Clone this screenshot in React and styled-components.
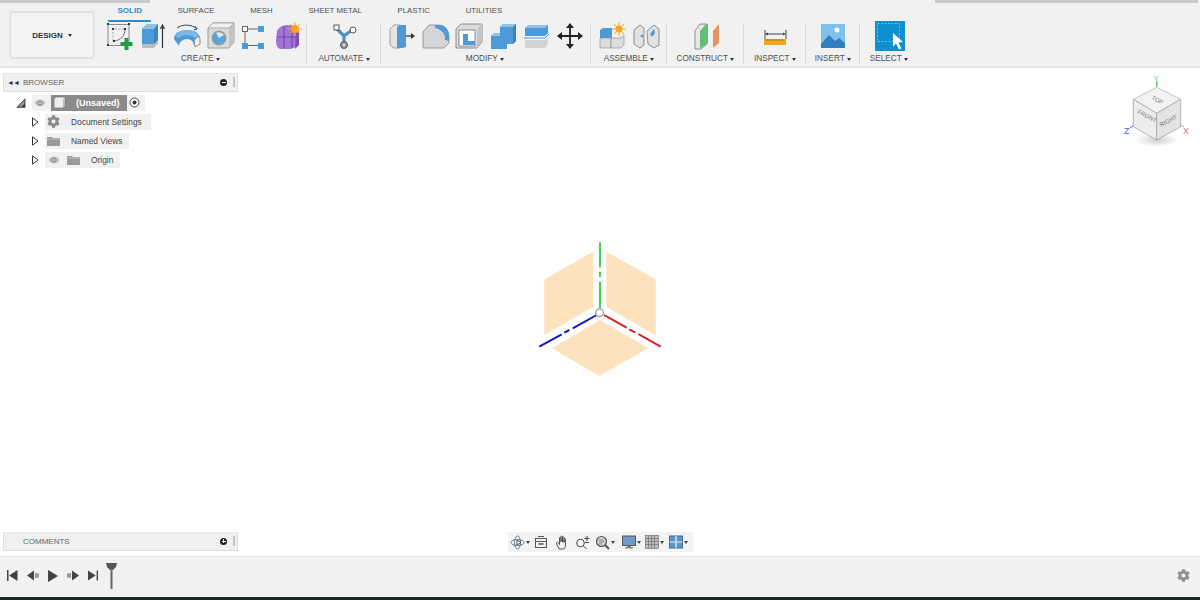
import React from "react";
import styled, { createGlobalStyle } from "styled-components";
import { FaCog } from "react-icons/fa";

const GlobalStyle = createGlobalStyle`
  html, body {
    margin: 0;
    padding: 0;
    background: #fff;
    font-family: "Liberation Sans", Arial, sans-serif;
  }
`;

const Page = styled.div`
  width: 1200px;
  height: 600px;
  display: flex;
  flex-direction: column;
  overflow: hidden;
`;

const TopStrip = styled.div`
  height: 3px;
  flex: none;
  display: flex;
  justify-content: space-between;
  background: #f1f1f1;
  padding-right: 2px;
`;

const StripSegment = styled.div`
  width: ${(p) => p.$width}px;
  background: #c9c9c9;
`;

const Toolbar = styled.div`
  height: 65px;
  flex: none;
  display: flex;
  align-items: flex-start;
  background: #f1f1f1;
  border-bottom: 2px solid #e4e4e4;
  box-sizing: border-box;
`;

const DesignButton = styled.div`
  width: 86px;
  height: 48px;
  margin: 8px 8px 0 9px;
  flex: none;
  box-sizing: border-box;
  display: flex;
  align-items: center;
  justify-content: center;
  gap: 5px;
  border: 2px solid #e2e2e2;
  border-radius: 4px;
  background: #f2f2f2;
  color: #333;
  font-size: 8px;
  font-weight: bold;
`;

const Caret = styled.span`
  display: inline-block;
  width: 0;
  height: 0;
  border-left: 2.5px solid transparent;
  border-right: 2.5px solid transparent;
  border-top: 3px solid ${(p) => p.$color || "#333"};
`;

const ToolbarBody = styled.div`
  display: flex;
  flex-direction: column;
`;

const TabRow = styled.div`
  height: 19px;
  display: flex;
  gap: 16.7px;
  margin-left: 5px;
`;

const Tab = styled.div`
  height: 19px;
  box-sizing: border-box;
  padding: 3px 9.5px 0;
  font-size: ${(p) => (p.$active ? "8px" : "7.8px")};
  line-height: 10px;
  white-space: nowrap;
  color: ${(p) => (p.$active ? "#2a8fc9" : "#4f4f4f")};
  font-weight: ${(p) => (p.$active ? "bold" : "normal")};
  border-bottom: 2px solid ${(p) => (p.$active ? "#2a8fc9" : "transparent")};
`;

const GroupRow = styled.div`
  display: flex;
`;

const Group = styled.div`
  width: ${(p) => p.$width}px;
  height: 41px;
  box-sizing: border-box;
  display: flex;
  flex-direction: column;
  align-items: center;
  position: relative;
  &::after {
    content: "";
    position: absolute;
    right: 0;
    top: 2px;
    bottom: -1px;
    width: 1px;
    background: ${(p) => (p.$last ? "transparent" : "#dadada")};
  }
`;

const ToolSlots = styled.div`
  display: flex;
  height: 32px;
  margin-top: -2px;
  margin-left: ${(p) => p.$shift || 0}px;
  align-self: ${(p) => (p.$start ? "flex-start" : "center")};
`;

const ToolSlot = styled.div`
  width: 33.6px;
  height: 32px;
  display: flex;
  align-items: center;
  justify-content: center;
`;

const GroupLabel = styled.div`
  display: flex;
  align-items: center;
  gap: 2.5px;
  margin-top: 2px;
  margin-right: ${(p) => p.$pull || 0}px;
  font-size: 8.2px;
  line-height: 10px;
  color: #505050;
  white-space: nowrap;
`;

const Canvas = styled.div`
  flex: 1;
  position: relative;
  background: #fff;
  display: flex;
  flex-direction: column;
  justify-content: space-between;
  padding: 5px 0 5px 3px;
  min-height: 0;
`;

const SidePanel = styled.div`
  width: 235px;
  display: flex;
  flex-direction: column;
`;

const PanelHeader = styled.div`
  height: 19px;
  box-sizing: border-box;
  display: flex;
  align-items: center;
  background: #f0f0f0;
  border: 1px solid #dedede;
  border-top-color: #e8e8e8;
  color: #666;
  font-size: 8px;
  padding: 0 2px 1px 3px;
`;

const CollapseMark = styled.span`
  width: 16px;
  flex: none;
  font-size: 7px;
  letter-spacing: -1px;
  color: #333;
`;

const PanelTitle = styled.span`
  flex: 1;
  margin-left: ${(p) => p.$indent || 0}px;
`;

const PanelDot = styled.span`
  width: 7px;
  height: 7px;
  border-radius: 50%;
  background: #222;
  margin-right: 6px;
  position: relative;
  &::after {
    content: "";
    position: absolute;
    left: 1.5px;
    top: 3px;
    width: 4px;
    height: 1px;
    background: #eee;
  }
  &::before {
    content: "";
    display: ${(p) => (p.$plus ? "block" : "none")};
    position: absolute;
    left: 3px;
    top: 1.5px;
    width: 1px;
    height: 4px;
    background: #eee;
  }
`;

const PanelGrip = styled.span`
  width: 2px;
  height: 10px;
  background: #c4c4c4;
`;

const Tree = styled.div`
  display: flex;
  flex-direction: column;
  margin-top: 1px;
`;

const TreeRow = styled.div`
  height: 19px;
  display: flex;
  align-items: center;
  padding-left: ${(p) => p.$indent}px;
`;

const Twisty = styled.svg`
  flex: none;
  width: 10px;
  height: 10px;
  margin-right: ${(p) => p.$gap}px;
`;

const NodeChip = styled.div`
  height: 16px;
  display: flex;
  align-items: center;
  background: #f1f1f1;
  font-size: 8.4px;
  color: #444;
  padding-right: ${(p) => p.$pad || 0}px;
`;

const NodeText = styled.span`
  display: inline-flex;
  align-items: center;
  margin-left: ${(p) => p.$gap}px;
  white-space: nowrap;
`;

const RootName = styled.div`
  height: 16px;
  width: 76px;
  box-sizing: border-box;
  display: flex;
  align-items: center;
  background: #8b8b8b;
  color: #fff;
  font-weight: bold;
  font-size: 9px;
  padding-left: 2px;
`;

const ViewCubeWrap = styled.svg`
  position: absolute;
  top: 2px;
  right: 0;
`;

const OriginWrap = styled.svg`
  position: absolute;
  left: 530px;
  top: 167px;
`;

const NavBar = styled.div`
  position: absolute;
  left: 508px;
  top: 464px;
  height: 20px;
  width: 185px;
  box-sizing: border-box;
  display: flex;
  align-items: center;
  padding-left: 2px;
  background: #f3f3f3;
`;

const NavItem = styled.div`
  display: flex;
  align-items: center;
  gap: 1px;
  width: ${(p) => p.$width}px;
  flex: none;
`;

const Timeline = styled.div`
  height: 41px;
  flex: none;
  box-sizing: border-box;
  display: flex;
  align-items: center;
  background: #f1f1f1;
  border-top: 1px solid #e6e6e6;
  padding: 0 10px 3px 7px;
`;

const Transport = styled.div`
  display: flex;
  align-items: center;
  gap: 9px;
`;

const Playhead = styled.svg`
  margin-left: 7.5px;
`;

const SettingsCog = styled(FaCog)`
  margin-left: auto;
  color: #8f8f8f;
  font-size: 13px;
`;

const BottomEdge = styled.div`
  height: 3px;
  flex: none;
  background: #1e2a24;
`;

/* ribbon icons, 32x32 */
const Ico = ({ children }) => (
  <svg width="32" height="32" viewBox="0 0 32 32">
    {children}
  </svg>
);

const SketchIcon = () => (
  <Ico>
    <rect x="4" y="4.500" width="21" height="21" fill="none" stroke="#8a8a8a" strokeWidth="1" />
    <path d="M9 21V9h12" fill="none" stroke="#a5a5a5" strokeDasharray="2 1.500" />
    <path d="M21 9c0 7-4 11-11 12" fill="none" stroke="#777" />
    <path d="M3 3h2v2H3zM24 3h2v2h-2zM3 24h2v2H3zM8 8h2v2H8zM9 20h2v2H9zM20 8h2v2h-2z" fill="#333" />
    <path d="M20.500 18h4v4h4v4h-4v4h-4v-4h-4v-4h4z" fill="#1f9b45" />
  </Ico>
);

const ExtrudeIcon = () => (
  <Ico>
    <path d="M5 9l5-5h11v19l-4 4H5z" fill="#4e9ad8" />
    <path d="M5 9l5-5h11l-4 5z" fill="#8ec2ea" />
    <path d="M17 9l4-5v19l-4 4z" fill="#3b83c0" />
    <path d="M5 24h12l4-4v3l-4 5H5z" fill="#bdbdbd" />
    <path d="M25.500 28V6M23.500 9l2-4 2 4" fill="none" stroke="#333" strokeWidth="1.200" />
  </Ico>
);

const RevolveIcon = () => (
  <Ico>
    <path d="M3 19c0-6 6-9 13-9s13 3 13 9l-6 7c0-4-3-7-7-7s-8 3-8 7z" fill="#4e9ad8" />
    <path d="M4 16c3-4 7-6 12-6s9 2 12 6l-4 2c-2-2-5-3-8-3s-6 1-8 3z" fill="#7db8e6" />
    <path d="M23 20l5-4 1 3v5l-5 3z" fill="#efefef" stroke="#777" strokeWidth="0.8" />
    <path d="M6 8c5-4 15-4 20 1M24 6l2 3-3 1" fill="none" stroke="#444" strokeWidth="1" />
  </Ico>
);

const HoleIcon = () => (
  <Ico>
    <path d="M3 8l5-5h21v19l-5 6H3z" fill="#dcdcdc" stroke="#8a8a8a" strokeWidth="0.8" />
    <path d="M24 8l5-5v19l-5 6z" fill="#c4c4c4" />
    <path d="M3 8l5-5h21l-5 5z" fill="#f0f0f0" stroke="#8a8a8a" strokeWidth="0.6" />
    <circle cx="14" cy="18" r="7.500" fill="#9a9a9a" />
    <circle cx="14" cy="18" r="6" fill="#5ba3dc" />
    <path d="M14 18l5-3a6 6 0 0 0-8-2z" fill="#d6e8f5" />
  </Ico>
);

const PatternIcon = () => (
  <Ico>
    <rect x="4.500" y="6.500" width="5" height="5" fill="#fff" stroke="#666" />
    <path d="M10 9h10M7 12v11M10 25.500h10" stroke="#666" fill="none" />
    <rect x="20" y="6" width="6" height="6" fill="#4b9bd5" />
    <rect x="4" y="23" width="6" height="6" fill="#4b9bd5" />
    <rect x="20" y="23" width="6" height="6" fill="#4b9bd5" />
  </Ico>
);

const FormIcon = () => (
  <Ico>
    <path d="M5 11c2-4 6-6 11-6 6 0 11 3 11 10 0 8-3 14-10 14H9c-3 0-5-3-5-9z" fill="#a473d6" />
    <path d="M5 17h20M12 6v22M20 7v21" stroke="#6f42a8" strokeWidth="1" fill="none" />
    <path d="M24 12l3-1v14l-4 4z" fill="#7c4fb6" />
    <circle cx="23" cy="9" r="4" fill="#f5a623" />
    <path d="M23 2v14M16 9h14M18 4l10 10M28 4L18 14" stroke="#f5a623" strokeWidth="1" />
  </Ico>
);

const AutomateIcon = () => (
  <Ico>
    <path d="M8 8l8 8 8-6M16 16v8" fill="none" stroke="#4e90c6" strokeWidth="3.200" />
    <rect x="6" y="5" width="5" height="5" fill="#fff" stroke="#555" />
    <circle cx="25" cy="10" r="3" fill="#fff" stroke="#555" />
    <circle cx="16" cy="25" r="3.500" fill="#999" stroke="#555" />
    <circle cx="16" cy="25" r="1" fill="#fff" />
  </Ico>
);

const PressPullIcon = () => (
  <Ico>
    <path d="M4 9l4-4h6v23H8l-4-3z" fill="#e4e4e4" stroke="#888" strokeWidth="0.8" />
    <path d="M11 7l3-2h6v22l-3 1h-6z" fill="#4e9ad8" />
    <path d="M20 16h6" stroke="#333" strokeWidth="1.200" />
    <path d="M25 13l4 3-4 3z" fill="#333" />
  </Ico>
);

const FilletIcon = () => (
  <Ico>
    <path d="M3 12l6-7h10c6 0 10 6 10 12v6l-5 5H3z" fill="#d6d6d6" stroke="#888" strokeWidth="0.8" />
    <path d="M15 5h5c5 0 9 5 9 11v5l-4-1c1-6-4-11-10-12z" fill="#4e9ad8" />
  </Ico>
);

const ShellIcon = () => (
  <Ico>
    <path d="M3 9l5-5h21v18l-5 6H3z" fill="#dcdcdc" stroke="#777" strokeWidth="0.8" />
    <rect x="6" y="10" width="16" height="16" fill="#fff" stroke="#777" strokeWidth="0.8" />
    <path d="M10 14h5v7h7v4H10z" fill="#4e9ad8" />
    <path d="M24 9l5-5v18l-5 6z" fill="#c4c4c4" />
  </Ico>
);

const CombineIcon = () => (
  <Ico>
    <path d="M4 16l3-3h6V7l3-3h13v17l-3 3h-6v5H4z" fill="#4e9ad8" />
    <path d="M13 7l3-3h13l-3 3zM4 16l3-3h6v3z" fill="#8ec2ea" />
    <path d="M26 7l3-3v17l-3 3z" fill="#3b83c0" />
  </Ico>
);

const SplitIcon = () => (
  <Ico>
    <path d="M5 8l4-3h19v8l-3 3H5z" fill="#4e9ad8" />
    <path d="M5 8l4-3h19l-3 3z" fill="#8ec2ea" />
    <path d="M4 18h21l4-4" stroke="#4e9ad8" strokeWidth="1" fill="none" />
    <path d="M5 20h20l3-3v7l-3 4H5z" fill="#d2d2d2" />
  </Ico>
);

const MoveIcon = () => (
  <Ico>
    <path d="M16 7v19M6 16h20" stroke="#222" strokeWidth="1.800" />
    <path d="M16 3l4 5h-8zM16 29l4-5h-8zM3 16l5-4v8zM29 16l-5-4v8z" fill="#222" />
  </Ico>
);

const NewComponentIcon = () => (
  <Ico>
    <path d="M4 10l3-2h9v10H4z" fill="#4e9ad8" />
    <path d="M4 18h11v10H4z" fill="#dcdcdc" stroke="#888" strokeWidth="0.6" />
    <path d="M15 18h10l3-3v10l-3 3H15z" fill="#dcdcdc" stroke="#888" strokeWidth="0.6" />
    <circle cx="23" cy="9" r="3.500" fill="#f5a623" />
    <path d="M23 2v14M16 9h14M18 4l10 10M28 4L18 14" stroke="#f5a623" strokeWidth="1" />
  </Ico>
);

const JointIcon = () => (
  <Ico>
    <path d="M4 10l6-5 4 3v17l-4 3-6-4z" fill="#e2e2e2" stroke="#777" strokeWidth="0.8" />
    <path d="M17 11l7-6 5 4v16l-5 3-6-4z" fill="#e2e2e2" stroke="#777" strokeWidth="0.8" />
    <path d="M20 14l4-5 1 4-3 4z" fill="#4e9ad8" />
    <path d="M10 16l3-2v4z" fill="#4e9ad8" />
  </Ico>
);

const ConstructIcon = () => (
  <Ico>
    <path d="M5 11l5-7h7v20l-6 5H5z" fill="#e8e8e8" stroke="#777" strokeWidth="0.8" />
    <path d="M10 11l6-7h2v19l-7 5h-1z" fill="#63bd79" />
    <path d="M23 11l6-7v19l-6 5z" fill="#e59560" />
  </Ico>
);

const InspectIcon = () => (
  <Ico>
    <path d="M6 10v9M27 10v9M7 14h18" stroke="#444" strokeWidth="1" fill="none" />
    <path d="M6 14l3-1.500v3zM27 14l-3-1.500v3z" fill="#444" />
    <rect x="5" y="19" width="22" height="6" fill="#f0a41f" />
    <path d="M8 19v2M11 19v2M14 19v2M17 19v2M20 19v2M23 19v2" stroke="#7a5a10" strokeWidth="0.7" />
  </Ico>
);

const InsertIcon = () => (
  <Ico>
    <rect x="4" y="4" width="24" height="24" fill="#7fc0ee" />
    <circle cx="20" cy="10" r="2.500" fill="#fff" />
    <path d="M4 24l8-9 6 6 4-3 6 5v5H4z" fill="#2f7fbe" />
  </Ico>
);

const SelectIcon = () => (
  <Ico>
    <rect x="1" y="1" width="30" height="30" fill="#0f8fd0" />
    <rect x="3.500" y="3.500" width="22" height="18" fill="none" stroke="#5fd0d0" strokeWidth="0.9" strokeDasharray="2 1.500" />
    <path d="M19 13l10 9-4.500.500 3 6-2.500 1-3-6-3 3z" fill="#fff" />
  </Ico>
);

const Eye = () => (
  <svg width="12" height="8" viewBox="0 0 12 8">
    <path d="M0.500 4C2 1.500 4 .5 6 .5S10 1.500 11.500 4C10 6.500 8 7.500 6 7.500S2 6.500.5 4z" fill="#bdbdbd" />
    <circle cx="6" cy="4" r="2.200" fill="#8d8d8d" />
    <circle cx="6" cy="4" r="1" fill="#e8e8e8" />
  </svg>
);

const Folder = () => (
  <svg width="13" height="10" viewBox="0 0 13 10">
    <path d="M0 1h5l1 1h7v8H0z" fill="#9a9a9a" />
    <path d="M0 3h13" stroke="#c8c8c8" strokeWidth="0.8" />
  </svg>
);

const Cog = styled(FaCog)`
  color: #8a8a8a;
  font-size: 13px;
`;

const TwistyOpen = () => (
  <Twisty $gap={6} viewBox="0 0 10 10">
    <path d="M1 9.300L9 1v8.300z" fill="#9a9a9a" stroke="#333" strokeWidth="0.9" />
    <path d="M5 9.300L9 5v4.300z" fill="#444" />
  </Twisty>
);

const TwistyClosed = () => (
  <Twisty $gap={5.5} viewBox="0 0 10 10">
    <path d="M2.500 .8L8 5 2.500 9.200z" fill="#fff" stroke="#333" strokeWidth="1" />
  </Twisty>
);

const RootBox = () => (
  <svg width="13" height="13" viewBox="0 0 13 13">
    <path d="M1 3l2-2h9v9l-2 2H1z" fill="#eee" stroke="#666" strokeWidth="0.6" />
    <path d="M10 3l2-2v9l-2 2z" fill="#bbb" />
  </svg>
);

const Radio = () => (
  <svg width="11" height="11" viewBox="0 0 11 11">
    <circle cx="5.500" cy="5.500" r="4.500" fill="#fff" stroke="#444" />
    <circle cx="5.500" cy="5.500" r="2" fill="#333" />
  </svg>
);

const OriginGraphic = () => (
  <OriginWrap width="140" height="145" viewBox="530 235 140 145">
    <g fill="#fde3bd">
      <polygon points="593.300,251.700 593.300,306.700 544.300,335 544.300,279.300" />
      <polygon points="606.300,251.700 606.300,306.700 655.700,335.700 655.700,279.300" />
      <polygon points="600,320 648.300,348.300 599.300,376 551.700,348.300" />
    </g>
    <g strokeWidth="2" fill="none">
      <path d="M600 242.300V267.300M600 271.700V277M600 281.700V308" stroke="#45d04f" />
      <path d="M596.700 315L572.700 328.300M569.300 330L564.300 332.700M561.700 334.300L539.300 346.700" stroke="#1414c8" />
      <path d="M604 315L626.700 327.700M629.300 329.300L635 332.300M638.300 334L660.700 346.700" stroke="#d81c1c" />
    </g>
    <circle cx="599.500" cy="312.700" r="3.800" fill="#fff" stroke="#9a9a9a" strokeWidth="1.300" />
  </OriginWrap>
);

const cubeText = { fontFamily: "Liberation Sans, sans-serif", fill: "#777", fontSize: 6 };

const ViewCube = () => (
  <ViewCubeWrap width="90" height="80" viewBox="1110 70 90 80">
    <defs>
      <radialGradient id="cubeShade">
        <stop offset="0" stopColor="#cfcfcf" />
        <stop offset="1" stopColor="#ffffff" />
      </radialGradient>
    </defs>
    <ellipse cx="1157" cy="140" rx="22" ry="7" fill="url(#cubeShade)" />
    <path d="M1156.700 87.300L1180.700 99.300 1156.700 113.300 1133.300 99.300z" fill="#f2f2f2" stroke="#b5b5b5" strokeWidth="0.8" />
    <path d="M1133.300 99.300L1156.700 113.300V140L1133.300 126.700z" fill="#ededed" stroke="#a5a5a5" strokeWidth="0.8" />
    <path d="M1180.700 99.300L1156.700 113.300V140L1180.700 126.700z" fill="#e4e4e4" stroke="#a5a5a5" strokeWidth="0.8" />
    <text x="0" y="0" style={cubeText} transform="translate(1151 99) rotate(28)">TOP</text>
    <text x="0" y="0" style={cubeText} transform="translate(1137 113) rotate(28)">FRONT</text>
    <text x="0" y="0" style={cubeText} transform="translate(1161 127) rotate(-28)">RIGHT</text>
    <path d="M1156.700 87V81" stroke="#5ecb6b" strokeWidth="1.500" />
    <text x="1153.500" y="81" fill="#69c977" fontSize="8" fontFamily="Liberation Sans, sans-serif">Y</text>
    <path d="M1133 126l-3 2" stroke="#5060d8" strokeWidth="1" />
    <text x="1124" y="134" fill="#5060d8" fontSize="9" fontFamily="Liberation Sans, sans-serif">Z</text>
    <path d="M1181 125l3 2" stroke="#e68080" strokeWidth="1" />
    <text x="1183" y="134" fill="#e27272" fontSize="9" fontFamily="Liberation Sans, sans-serif">X</text>
  </ViewCubeWrap>
);

const NavCaret = () => <Caret $color="#444" />;

const OrbitIcon = () => (
  <svg width="15" height="15" viewBox="0 0 15 15" fill="none" stroke="#5a7f9a">
    <ellipse cx="7.500" cy="7.500" rx="6.500" ry="3" />
    <ellipse cx="7.500" cy="7.500" rx="3" ry="6.500" />
    <path d="M7 5l4 2.500L7 10z" fill="#fff" stroke="#333" strokeWidth="0.8" />
  </svg>
);

const LookIcon = () => (
  <svg width="14" height="14" viewBox="0 0 14 14" fill="none" stroke="#555">
    <rect x="1.500" y="3.500" width="11" height="9" />
    <path d="M4 1.500h6M1.500 6.500h11" />
    <rect x="4.500" y="8" width="5" height="2" fill="#777" stroke="none" />
  </svg>
);

const HandIcon = () => (
  <svg width="15" height="15" viewBox="0 0 15 15" fill="none" stroke="#444" strokeWidth="0.9">
    <path d="M4 14L1.500 8.500c-.5-1 1-1.800 1.700-.8L4.500 9.500V3c0-1 1.500-1 1.500 0v4V1.800c0-1 1.500-1 1.500 0V7V2.500c0-1 1.500-1 1.500 0V7.500V4.200c0-1 1.500-1 1.500 0V10c0 2-1 4-2 4z" />
  </svg>
);

const ZoomPlusIcon = () => (
  <svg width="15" height="15" viewBox="0 0 15 15" fill="none" stroke="#444">
    <circle cx="5.500" cy="8" r="3.800" />
    <path d="M8.500 11l3 3M12 1v5M9.500 3.500h5M10 7.500h4" />
  </svg>
);

const ZoomFitIcon = () => (
  <svg width="15" height="15" viewBox="0 0 15 15" fill="none" stroke="#555">
    <circle cx="6.500" cy="6.500" r="5" fill="#d4d4d4" strokeWidth="1.200" />
    <path d="M4 5h5M4 7h5M4 9h3" stroke="#888" />
    <path d="M10 10l4 4" strokeWidth="2" />
  </svg>
);

const DisplayIcon = () => (
  <svg width="14" height="14" viewBox="0 0 14 14">
    <rect x="0.500" y="1" width="13" height="9.500" fill="#6e9cc4" stroke="#555" />
    <rect x="5" y="10.500" width="4" height="2" fill="#777" />
    <rect x="3" y="12" width="8" height="1.500" fill="#888" />
  </svg>
);

const GridIcon = () => (
  <svg width="14" height="14" viewBox="0 0 14 14" fill="#bdbdbd" stroke="#666" strokeWidth="0.6">
    <rect x="0.500" y="0.500" width="13" height="13" />
    <path d="M3.500 .5v13M6.500 .5v13M9.500 .5v13M.5 3.500h13M.5 6.500h13M.5 9.500h13" fill="none" />
  </svg>
);

const ViewportIcon = () => (
  <svg width="14" height="14" viewBox="0 0 14 14">
    <rect x="0.500" y="1" width="13" height="12" fill="#5c93c9" stroke="#44688a" />
    <path d="M7 1v12M.5 7h13" stroke="#eaf2f9" strokeWidth="1.200" />
  </svg>
);

const PrevEnd = () => (
  <svg width="11" height="11" viewBox="0 0 11 11" fill="#444">
    <path d="M0 0h1.500v11H0zM10.500 0v11L2 5.500z" />
  </svg>
);
const StepBack = () => (
  <svg width="12" height="11" viewBox="0 0 12 11" fill="#444">
    <path d="M7 0.500v10L0 5.500zM8.500 3h1v5h-1zM10.500 3.500h1v4h-1z" />
  </svg>
);
const PlayIcon = () => (
  <svg width="10" height="12" viewBox="0 0 10 12" fill="#444">
    <path d="M0 0l10 6-10 6z" />
  </svg>
);
const StepForward = () => (
  <svg width="12" height="11" viewBox="0 0 12 11" fill="#444">
    <path d="M5 0.500v10l7-5zM2.500 3h1v5h-1zM.5 3.500h1v4h-1z" />
  </svg>
);
const NextEnd = () => (
  <svg width="10" height="11" viewBox="0 0 11 11" fill="#444">
    <path d="M9.500 0H11v11H9.500zM0 0v11l8.500-5.500z" />
  </svg>
);

const tabs = ["SOLID", "SURFACE", "MESH", "SHEET METAL", "PLASTIC", "UTILITIES"];

const groups = [
  { label: "CREATE", width: 204, pull: 9, start: true, icons: [SketchIcon, ExtrudeIcon, RevolveIcon, HoleIcon, PatternIcon, FormIcon] },
  { label: "AUTOMATE", width: 74, icons: [AutomateIcon] },
  { label: "MODIFY", width: 210, pull: 2, icons: [PressPullIcon, FilletIcon, ShellIcon, CombineIcon, SplitIcon, MoveIcon] },
  { label: "ASSEMBLE", width: 76, icons: [NewComponentIcon, JointIcon] },
  { label: "CONSTRUCT", width: 77, icons: [ConstructIcon] },
  { label: "INSPECT", width: 62, icons: [InspectIcon] },
  { label: "INSERT", width: 54, icons: [InsertIcon] },
  { label: "SELECT", width: 58, last: true, shift: 2, icons: [SelectIcon] },
];

const App = () => {
  return (
    <>
      <GlobalStyle />
      <Page>
        <TopStrip>
          <StripSegment $width={150} />
          <StripSegment $width={263} />
        </TopStrip>
        <Toolbar>
          <DesignButton>
            DESIGN <Caret />
          </DesignButton>
          <ToolbarBody>
            <TabRow>
              {tabs.map((t, i) => (
                <Tab key={t} $active={i === 0}>
                  {t}
                </Tab>
              ))}
            </TabRow>
            <GroupRow>
              {groups.map((g) => (
                <Group key={g.label} $width={g.width} $last={g.last}>
                  <ToolSlots $start={g.start} $shift={g.shift}>
                    {g.icons.map((Icon, i) => (
                      <ToolSlot key={i}>
                        <Icon />
                      </ToolSlot>
                    ))}
                  </ToolSlots>
                  <GroupLabel $pull={g.pull}>
                    {g.label} <Caret $color="#333" />
                  </GroupLabel>
                </Group>
              ))}
            </GroupRow>
          </ToolbarBody>
        </Toolbar>

        <Canvas>
          <SidePanel>
            <PanelHeader>
              <CollapseMark>◄◄</CollapseMark>
              <PanelTitle>BROWSER</PanelTitle>
              <PanelDot />
              <PanelGrip />
            </PanelHeader>
            <Tree>
              <TreeRow $indent={13}>
                <TwistyOpen />
                <NodeChip $pad={5}>
                  <NodeText $gap={2}>
                    <Eye />
                  </NodeText>
                  <NodeText $gap={5}>
                    <RootName>
                      <RootBox />
                      <NodeText $gap={10}>(Unsaved)</NodeText>
                    </RootName>
                  </NodeText>
                  <NodeText $gap={2}>
                    <Radio />
                  </NodeText>
                </NodeChip>
              </TreeRow>
              <TreeRow $indent={26.5}>
                <TwistyClosed />
                <NodeChip $pad={9}>
                  <NodeText $gap={2}>
                    <Cog />
                  </NodeText>
                  <NodeText $gap={11}>Document Settings</NodeText>
                </NodeChip>
              </TreeRow>
              <TreeRow $indent={26.5}>
                <TwistyClosed />
                <NodeChip $pad={6}>
                  <NodeText $gap={2}>
                    <Folder />
                  </NodeText>
                  <NodeText $gap={11}>Named Views</NodeText>
                </NodeChip>
              </TreeRow>
              <TreeRow $indent={26.5}>
                <TwistyClosed />
                <NodeChip $pad={7}>
                  <NodeText $gap={3}>
                    <Eye />
                  </NodeText>
                  <NodeText $gap={7}>
                    <Folder />
                  </NodeText>
                  <NodeText $gap={11}>Origin</NodeText>
                </NodeChip>
              </TreeRow>
            </Tree>
          </SidePanel>

          <SidePanel>
            <PanelHeader>
              <PanelTitle $indent={16}>COMMENTS</PanelTitle>
              <PanelDot $plus />
              <PanelGrip />
            </PanelHeader>
          </SidePanel>

          <OriginGraphic />
          <ViewCube />

          <NavBar>
            <NavItem $width={24}>
              <OrbitIcon />
              <NavCaret />
            </NavItem>
            <NavItem $width={21}>
              <LookIcon />
            </NavItem>
            <NavItem $width={20}>
              <HandIcon />
            </NavItem>
            <NavItem $width={20}>
              <ZoomPlusIcon />
            </NavItem>
            <NavItem $width={27}>
              <ZoomFitIcon />
              <NavCaret />
            </NavItem>
            <NavItem $width={23}>
              <DisplayIcon />
              <NavCaret />
            </NavItem>
            <NavItem $width={24}>
              <GridIcon />
              <NavCaret />
            </NavItem>
            <NavItem $width={22}>
              <ViewportIcon />
              <NavCaret />
            </NavItem>
          </NavBar>
        </Canvas>

        <Timeline>
          <Transport>
            <PrevEnd />
            <StepBack />
            <PlayIcon />
            <StepForward />
            <NextEnd />
          </Transport>
          <Playhead width="11" height="26" viewBox="0 0 11 26">
            <path d="M0 0h11l-1 4-3 3H4L1 4z" fill="#555" />
            <rect x="4.500" y="5" width="2" height="21" fill="#666" />
          </Playhead>
          <SettingsCog />
        </Timeline>
        <BottomEdge />
      </Page>
    </>
  );
};

export default App;
